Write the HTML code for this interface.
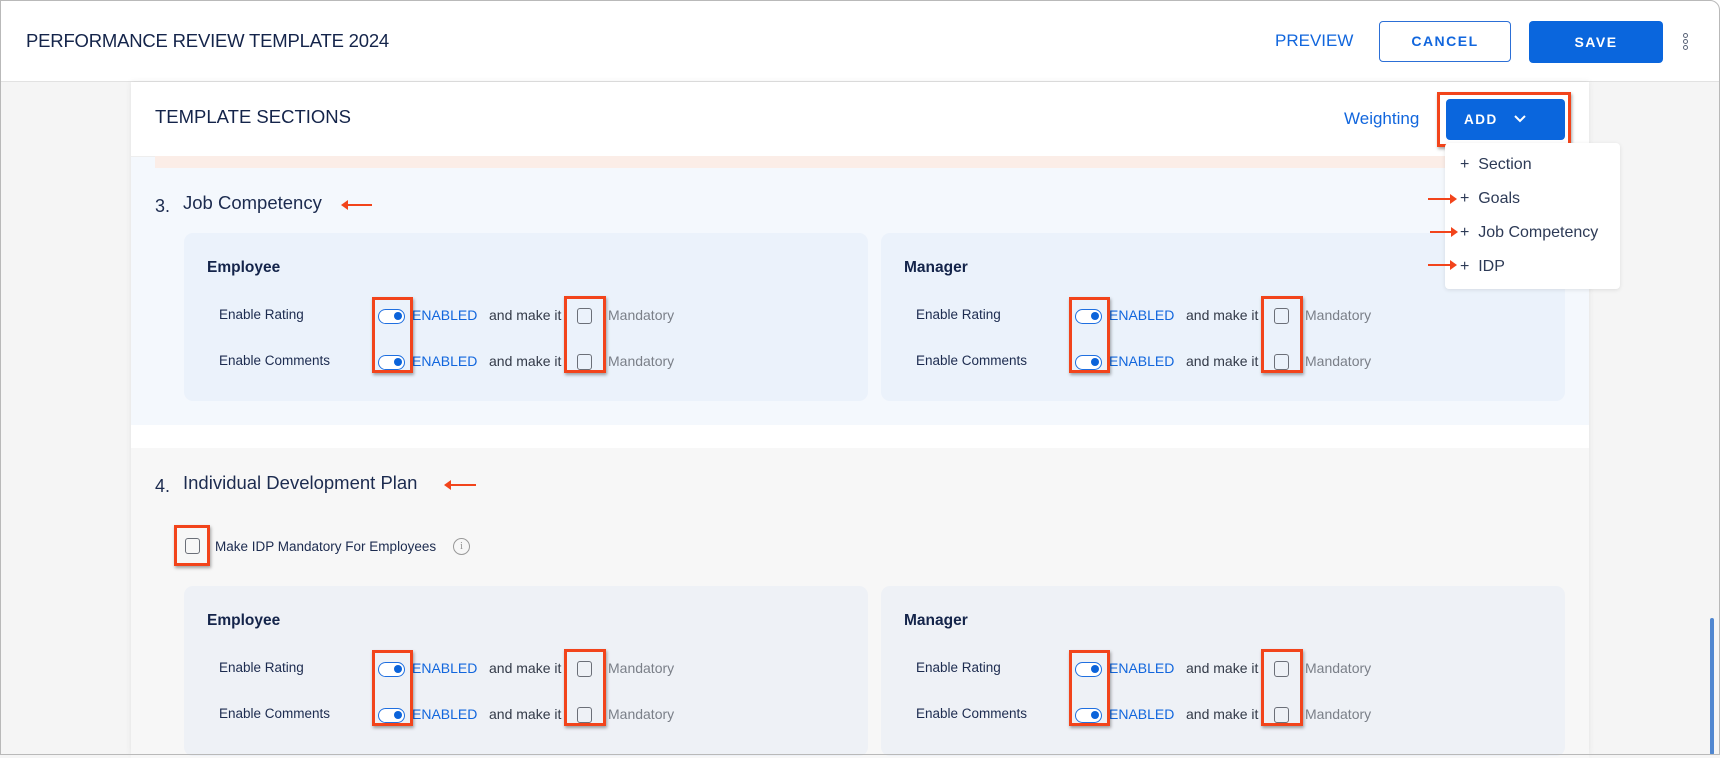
<!DOCTYPE html>
<html><head><meta charset="utf-8"><style>
*{box-sizing:border-box;margin:0;padding:0}
body{width:1720px;height:755px;overflow:hidden;background:#f5f5f5;font-family:"Liberation Sans",sans-serif;position:relative;color:#1c2b4f}
.a{position:absolute;white-space:nowrap}
.frame{position:absolute;left:0;top:0;width:1720px;height:755px;border:1px solid #b9b9b9;border-top-right-radius:10px;pointer-events:none;z-index:50}
.hdr{position:absolute;left:0;top:0;width:1720px;height:82px;background:#fff;border-bottom:1px solid #e2e2e2}
.card{position:absolute;left:131px;top:82px;width:1458px;height:673px;background:#fff;box-shadow:0 0 6px rgba(0,0,0,.08)}
.red{position:absolute;border:3px solid #f2441b;box-shadow:1px 2px 3px rgba(0,0,0,.35)}
.tg{position:absolute;width:27px;height:15px;border:1.5px solid #1f6fe0;border-radius:8px;background:#fff}
.tg:after{content:"";position:absolute;right:2px;top:2px;width:8px;height:8px;border-radius:50%;background:#0b63da}
.cb{position:absolute;width:15px;height:16px;border:1.6px solid #6b6f78;border-radius:3px;background:transparent}
.lbl{font-size:14px;color:#1c2b4f}
.en{font-size:14px;color:#1166dd}
.mk{font-size:14px;color:#333a48}
.md{font-size:14px;color:#7a7f88}
.arr{position:absolute;height:2px;background:#f2441b}
.arr:before{content:"";position:absolute;top:-4px;border:5px solid transparent}
.al:before{left:-7px;border-right:7px solid #f2441b;border-left:0}
.ar:before{right:-7px;border-left:7px solid #f2441b;border-right:0}
</style></head><body>
<div class="hdr"></div>
<div class="a" style="left:26px;top:30px;font-size:18.5px;color:#14244a;letter-spacing:-.2px">PERFORMANCE REVIEW TEMPLATE 2024</div>
<div class="a" style="left:1275px;top:31px;font-size:17px;color:#1166dd">PREVIEW</div>
<div class="a" style="left:1379px;top:21px;width:132px;height:41px;border:1.5px solid #2c6fd6;border-radius:4px;color:#1166dd;font-size:14px;font-weight:bold;letter-spacing:1.5px;text-align:center;line-height:38px">CANCEL</div>
<div class="a" style="left:1529px;top:21px;width:134px;height:42px;background:#0a66dd;border-radius:4px;color:#fff;font-size:14px;font-weight:bold;letter-spacing:1.5px;text-align:center;line-height:42px">SAVE</div>
<div class="a" style="left:1683px;top:33px;width:5px;height:5px;border:1.3px solid #5a6478;border-radius:50%"></div>
<div class="a" style="left:1683px;top:39px;width:5px;height:5px;border:1.3px solid #5a6478;border-radius:50%"></div>
<div class="a" style="left:1683px;top:45px;width:5px;height:5px;border:1.3px solid #5a6478;border-radius:50%"></div>

<div class="card">
<div class="a" style="left:0;top:74px;width:1458px;height:1px;background:#eee"></div>
<div class="a" style="left:0;top:75px;width:1458px;height:268px;background:#f4f8fd"></div>
<div class="a" style="left:24px;top:74px;width:1410px;height:12px;background:#fbede7"></div>
<div class="a" style="left:0;top:366px;width:1458px;height:310px;background:#f7f7f7"></div>
</div>
<div class="a" style="left:155px;top:106px;font-size:18.5px;color:#14244a">TEMPLATE SECTIONS</div>
<div class="a" style="left:1344px;top:109px;font-size:17px;color:#1166dd">Weighting</div>

<div class="a" style="left:155px;top:196px;font-size:18px;color:#1c2b4f">3.</div>
<div class="a" style="left:183px;top:192px;font-size:18.5px;color:#1c2b4f">Job Competency</div>
<div class="arr al" style="left:348px;top:204px;width:24px"></div>
<div class="a" style="left:184px;top:233px;width:684px;height:168px;background:#ebf2fb;border-radius:9px"></div>
<div class="a" style="left:881px;top:233px;width:684px;height:168px;background:#ebf2fb;border-radius:9px"></div>

<div class="a" style="left:155px;top:476px;font-size:18px;color:#1c2b4f">4.</div>
<div class="a" style="left:183px;top:472px;font-size:18.5px;color:#1c2b4f">Individual Development Plan</div>
<div class="arr al" style="left:451px;top:484px;width:25px"></div>
<div class="cb" style="left:185px;top:538px"></div>
<div class="red" style="left:174px;top:525px;width:36px;height:41px"></div>
<div class="a lbl" style="left:215px;top:539px;font-size:13.5px">Make IDP Mandatory For Employees</div>
<div class="a" style="left:453px;top:538px;width:17px;height:17px;border:1.2px solid #999;border-radius:50%;font-size:11px;color:#999;text-align:center;line-height:15px;font-family:'Liberation Serif',serif">i</div>
<div class="a" style="left:184px;top:586px;width:684px;height:170px;background:#eef1f6;border-radius:9px"></div>
<div class="a" style="left:881px;top:586px;width:684px;height:170px;background:#eef1f6;border-radius:9px"></div>

<div id="p"></div>

<div class="a" style="left:1446px;top:99px;width:119px;height:41px;background:#0a66dd;border-radius:4px;color:#fff;font-size:13.5px;font-weight:bold;letter-spacing:1.5px;line-height:41px;padding-left:18px">ADD</div>
<svg class="a" style="left:1513px;top:114px" width="14" height="10"><path d="M2 2 L7 7 L12 2" stroke="#fff" stroke-width="2" fill="none"/></svg>
<div class="red" style="left:1437px;top:92px;width:134px;height:55px"></div>
<div class="a" style="left:1445px;top:143px;width:175px;height:146px;background:#fff;border-radius:4px;box-shadow:0 1px 4px rgba(0,0,0,.1)"></div>
<div class="a" style="left:1460px;top:153px;font-size:16px;color:#2d3a56;line-height:24px">+&nbsp; Section<br><div style="height:10px"></div>+&nbsp; Goals<br><div style="height:10px"></div>+&nbsp; Job Competency<br><div style="height:10px"></div>+&nbsp; IDP</div>
<div class="arr ar" style="left:1428px;top:198px;width:22px"></div>
<div class="arr ar" style="left:1430px;top:231px;width:21px"></div>
<div class="arr ar" style="left:1428px;top:264px;width:22px"></div>

<div class="a" style="left:1710px;top:618px;width:4px;height:137px;background:#4f86d0;border-radius:2px"></div>
<div class="frame"></div>

<script>
var h='';
function panel(x,y,name){
 var ry=[y+83,y+129];
 h+='<div class="a" style="left:'+(x+23)+'px;top:'+(y+26)+'px;font-size:15.5px;font-weight:bold;color:#14244a">'+name+'</div>';
 var labs=['Enable Rating','Enable Comments'];
 for(var i=0;i<2;i++){var t=ry[i];
  h+='<div class="a lbl" style="left:'+(x+35)+'px;top:'+(t-9)+'px;font-size:13.5px">'+labs[i]+'</div>';
  h+='<div class="tg" style="left:'+(x+194)+'px;top:'+(t-7)+'px"></div>';
  h+='<div class="a en" style="left:'+(x+228)+'px;top:'+(t-9)+'px">ENABLED</div>';
  h+='<div class="a mk" style="left:'+(x+305)+'px;top:'+(t-9)+'px">and make it</div>';
  h+='<div class="cb" style="left:'+(x+393)+'px;top:'+(t-8)+'px"></div>';
  h+='<div class="a md" style="left:'+(x+424)+'px;top:'+(t-9)+'px">Mandatory</div>';
 }
 h+='<div class="red" style="left:'+(x+188)+'px;top:'+(y+64)+'px;width:41px;height:76px"></div>';
 h+='<div class="red" style="left:'+(x+380)+'px;top:'+(y+63)+'px;width:42px;height:77px"></div>';
}
panel(184,233,'Employee');panel(881,233,'Manager');
panel(184,586,'Employee');panel(881,586,'Manager');
document.getElementById('p').innerHTML=h;
</script>
</body></html>
